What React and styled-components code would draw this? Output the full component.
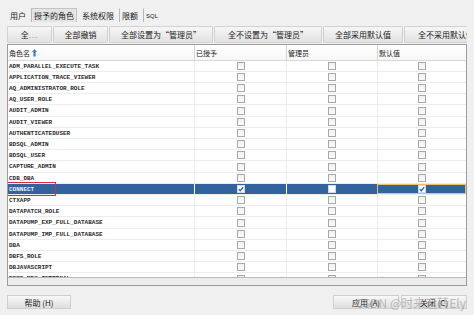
import React from 'react';
import styled, { createGlobalStyle } from 'styled-components';

const GlobalStyle = createGlobalStyle`
  html, body {
    margin: 0;
    padding: 0;
    background: #f0f0f0;
  }
  body {
    font-family: "Noto Sans CJK SC", "Liberation Sans", sans-serif;
    font-size: 8px;
    color: #1a1a1a;
    overflow: hidden;
  }
`;

const Window = styled.div`
  position: relative;
  width: 474px;
  height: 315px;
  padding: 8px 7px 0 7px;
  box-sizing: border-box;
  display: flex;
  flex-direction: column;
`;

const TabBar = styled.div`
  display: flex;
  align-items: stretch;
  height: 14px;
  gap: 2px;
`;

const Tab = styled.div`
  display: flex;
  align-items: center;
  padding: 0 2px;
  line-height: 1;
  box-sizing: border-box;
  background: ${p => (p.$active ? '#e4e4e4' : 'transparent')};
  border: 1px solid ${p => (p.$active ? '#c4c4c4' : 'transparent')};
  border-bottom: none;
  border-left-color: ${p => (p.$boxed || p.$active ? '#b8b8b8' : 'transparent')};
  font-family: ${p => (p.$latin ? '"Liberation Sans", sans-serif' : 'inherit')};
  font-size: ${p => (p.$latin ? '6px' : '8px')};
`;

const ButtonRow = styled.div`
  display: flex;
  margin-top: 4px;
  height: 17px;
  gap: 1px;
  overflow: hidden;
`;

const ToolButton = styled.div`
  flex: 0 0 ${p => p.$w}px;
  display: flex;
  align-items: center;
  justify-content: ${p => (p.$clip ? 'flex-start' : 'center')};
  padding-left: ${p => (p.$clip ? '13px' : '0')};
  box-sizing: border-box;
  white-space: nowrap;
  overflow: hidden;
  background: linear-gradient(#f6f6f6, #e2e2e2);
  border: 1px solid #d2d2d2;
  border-radius: 1px;
  font-size: 8px;
  color: #222;
`;

const Dim = styled.span`
  color: #9a9a9a;
  letter-spacing: 1px;
`;

const Table = styled.div`
  margin-top: 1px;
  width: 460px;
  height: 242px;
  border: 1px solid #9c9c9c;
  box-sizing: border-box;
  background: #fff;
  display: flex;
  flex-direction: column;
  overflow: hidden;
`;

const cols = '186px 92px 91px 89px';

const HeaderRow = styled.div`
  display: grid;
  grid-template-columns: ${cols};
  height: 16px;
  flex: 0 0 16px;
  border-bottom: 1px solid #d8d8d8;
  box-sizing: border-box;
  background: linear-gradient(#ffffff, #f7f7f7);
`;

const HeaderCell = styled.div`
  display: flex;
  align-items: center;
  padding-left: 1px;
  border-left: ${p => (p.$first ? 'none' : '1px solid #d4d4d4')};
  font-size: 7px;
  gap: 2px;
`;

const Body = styled.div`
  flex: 1;
  overflow: hidden;
  position: relative;
`;

const Row = styled.div`
  position: relative;
  display: grid;
  grid-template-columns: ${cols};
  height: ${p => (p.$tall ? 12 : 11)}px;
  box-sizing: border-box;
  border-bottom: 1px solid #ececec;
  background: ${p => (p.$selected ? '#32639e' : '#fff')};
`;

const NameCell = styled.div`
  display: flex;
  align-items: center;
  padding-left: 1px;
  font-family: "Liberation Mono", monospace;
  font-size: 6px;
  font-weight: bold;
  color: ${p => (p.$selected ? '#e8eef8' : '#2a2a2a')};
  white-space: nowrap;
  overflow: hidden;
`;

const CheckCell = styled.div`
  display: flex;
  align-items: center;
  justify-content: center;
  border-left: 1px solid ${p => (p.$selected ? '#ffffff' : '#ececec')};
  box-sizing: border-box;
  ${p => p.$focus && 'outline: 1px solid #e8c070; outline-offset: -1px;'}
`;

const Box = styled.div`
  width: 8px;
  height: 8px;
  box-sizing: border-box;
  border: 1px solid ${p => (p.$selected ? '#cfd8e6' : '#a8a8a8')};
  background: ${p => (p.$selected ? '#ffffff' : 'linear-gradient(#f0f0f0, #fafafa)')};
  display: flex;
  align-items: center;
  justify-content: center;
`;

const Marker = styled.div`
  position: absolute;
  z-index: 3;
  left: -2px;
  top: -2px;
  width: 50px;
  height: 14px;
  box-sizing: border-box;
  border: 1.5px solid #d2303c;
  pointer-events: none;
`;

const ScrollTrack = styled.div`
  flex: 0 0 8px;
  background: #ececec;
  border-top: 1px solid #b8b8b8;
  box-sizing: border-box;
`;

const Footer = styled.div`
  display: flex;
  justify-content: space-between;
  margin-top: 9px;
  height: 14px;
`;

const FooterGroup = styled.div`
  display: flex;
  gap: 2px;
`;

const DialogButton = styled.div`
  width: ${p => p.$w}px;
  display: flex;
  align-items: center;
  justify-content: center;
  background: linear-gradient(#f8f8f8, #dedede);
  border: 1px solid #cfcfcf;
  box-sizing: border-box;
  font-size: 8px;
  color: #222;
`;

const Watermark = styled.div`
  position: absolute;
  right: 8px;
  bottom: 4px;
  font-family: "Noto Sans CJK SC", "Liberation Sans", sans-serif;
  font-size: 12px;
  color: rgba(150, 150, 150, 0.6);
  pointer-events: none;
  white-space: nowrap;
`;

const Check = () => (
  <svg width="6" height="6" viewBox="0 0 6 6">
    <path d="M0.8 3.2 L2.3 4.7 L5.2 1.2" fill="none" stroke="#2a5aa8" strokeWidth="1.3" />
  </svg>
);

const SortIcon = () => (
  <svg width="5" height="8" viewBox="0 0 5 8">
    <path d="M2.5 0 L5 3 L3.6 3 L3.6 7.5 L1.4 7.5 L1.4 3 L0 3 Z" fill="#3a7fd0" />
  </svg>
);

const roles = [
  'ADM_PARALLEL_EXECUTE_TASK',
  'APPLICATION_TRACE_VIEWER',
  'AQ_ADMINISTRATOR_ROLE',
  'AQ_USER_ROLE',
  'AUDIT_ADMIN',
  'AUDIT_VIEWER',
  'AUTHENTICATEDUSER',
  'BDSQL_ADMIN',
  'BDSQL_USER',
  'CAPTURE_ADMIN',
  'CDB_DBA',
  'CONNECT',
  'CTXAPP',
  'DATAPATCH_ROLE',
  'DATAPUMP_EXP_FULL_DATABASE',
  'DATAPUMP_IMP_FULL_DATABASE',
  'DBA',
  'DBFS_ROLE',
  'DBJAVASCRIPT',
  'DBMS_MDX_INTERNAL',
];

const buttons = [
  { label: <>全<Dim>...</Dim></>, w: 45 },
  { label: '全部撤销', w: 55 },
  { label: '全部设置为“管理员”', w: 104 },
  { label: '全不设置为“管理员”', w: 108 },
  { label: '全部采用默认值', w: 80 },
  { label: '全不采用默认值', w: 66, clip: true },
];

export default function App() {
  return (
    <>
      <GlobalStyle />
      <Window>
        <TabBar>
          <Tab>用户</Tab>
          <Tab $active>授予的角色</Tab>
          <Tab>系统权限</Tab>
          <Tab $boxed>限额</Tab>
          <Tab $boxed $latin>SQL</Tab>
        </TabBar>

        <ButtonRow>
          {buttons.map((b, i) => (
            <ToolButton key={i} $w={b.w} $clip={b.clip}>{b.label}</ToolButton>
          ))}
        </ButtonRow>

        <Table>
          <HeaderRow>
            <HeaderCell $first>角色名 <SortIcon /></HeaderCell>
            <HeaderCell>已授予</HeaderCell>
            <HeaderCell>管理员</HeaderCell>
            <HeaderCell>默认值</HeaderCell>
          </HeaderRow>
          <Body>
            {roles.map((name, i) => {
              const sel = name === 'CONNECT';
              return (
                <Row key={name} $selected={sel} $tall={i % 5 === 4}>
                  <NameCell $selected={sel}>
                    {name}
                  </NameCell>
                  <CheckCell $selected={sel}>
                    <Box $selected={sel}>{sel && <Check />}</Box>
                  </CheckCell>
                  <CheckCell $selected={sel}>
                    <Box $selected={sel} />
                  </CheckCell>
                  <CheckCell $selected={sel} $focus={sel}>
                    <Box $selected={sel}>{sel && <Check />}</Box>
                  </CheckCell>
                  {sel && <Marker />}
                </Row>
              );
            })}
          </Body>
          <ScrollTrack />
        </Table>

        <Footer>
          <DialogButton $w={64}>帮助 (H)</DialogButton>
          <FooterGroup>
            <DialogButton $w={66}>应用 (A)</DialogButton>
            <DialogButton $w={66}>关闭 (C)</DialogButton>
          </FooterGroup>
        </Footer>
        <Watermark>CSDN @时来运转Ely</Watermark>
      </Window>
    </>
  );
}
